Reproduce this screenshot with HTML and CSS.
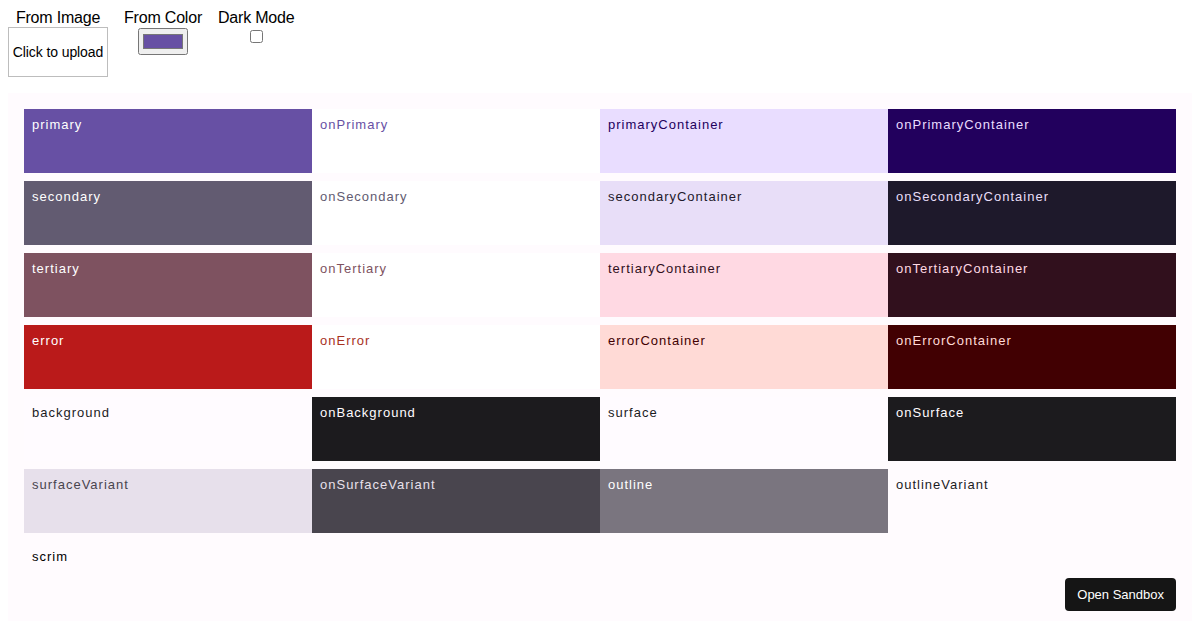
FILE: index.html
```html
<!DOCTYPE html>
<html lang="en">
<head>
  <meta charset="UTF-8" />
  <title>Material Theme Colors</title>
  <link rel="stylesheet" href="styles.css">
</head>
<body>

  <div class="controls">
    <div class="field">
      <label>From Image</label>
      <div class="upload">Click to upload</div>
    </div>
    <div class="field">
      <label>From Color</label>
      <input type="color" value="#6750a4">
    </div>
    <div class="field">
      <label>Dark Mode</label>
      <input type="checkbox">
    </div>
  </div>

  <div class="panel">
    <div class="grid">
      <div class="tile primary">primary</div>
      <div class="tile on-primary">onPrimary</div>
      <div class="tile primary-container">primaryContainer</div>
      <div class="tile on-primary-container">onPrimaryContainer</div>

      <div class="tile secondary">secondary</div>
      <div class="tile on-secondary">onSecondary</div>
      <div class="tile secondary-container">secondaryContainer</div>
      <div class="tile on-secondary-container">onSecondaryContainer</div>

      <div class="tile tertiary">tertiary</div>
      <div class="tile on-tertiary">onTertiary</div>
      <div class="tile tertiary-container">tertiaryContainer</div>
      <div class="tile on-tertiary-container">onTertiaryContainer</div>

      <div class="tile error">error</div>
      <div class="tile on-error">onError</div>
      <div class="tile error-container">errorContainer</div>
      <div class="tile on-error-container">onErrorContainer</div>

      <div class="tile background">background</div>
      <div class="tile on-background">onBackground</div>
      <div class="tile surface">surface</div>
      <div class="tile on-surface">onSurface</div>

      <div class="tile surface-variant">surfaceVariant</div>
      <div class="tile on-surface-variant">onSurfaceVariant</div>
      <div class="tile outline">outline</div>
      <div class="tile outline-variant">outlineVariant</div>

      <div class="tile scrim">scrim</div>
    </div>
    <button class="sandbox">Open Sandbox</button>
  </div>

</body>
</html>
```

FILE: styles.css
```css
body {
  margin: 8px;
  font-family: "Liberation Sans", Arial, sans-serif;
  background: #fff;
  color: #000;
}
.controls {
  display: flex;
  gap: 16px;
  align-items: flex-start;
}
.field {
  display: flex;
  flex-direction: column;
  align-items: center;
  font-size: 16px;
}
.field label {
  line-height: 19px;
  letter-spacing: -0.2px;
}
.upload {
  width: 98px;
  height: 48px;
  border: 1px solid #bdbdbd;
  display: flex;
  align-items: center;
  justify-content: center;
  font-size: 14px;
  letter-spacing: -0.1px;
}
.field input[type="color"] {
  width: 50px;
  height: 27px;
  margin: 1px 0 0;
}
.field input[type="checkbox"] {
  margin: 3px 0 0;
}
.panel {
  position: relative;
  margin-top: 16px;
  padding: 16px;
  background: #fffbfe;
}
.grid {
  display: grid;
  grid-template-columns: repeat(4, 1fr);
  grid-auto-rows: 64px;
  row-gap: 8px;
}
.tile {
  padding: 8px;
  font-family: "Liberation Sans", Arial, sans-serif;
  font-size: 13px;
  letter-spacing: 1px;
  line-height: 16px;
}
.primary { background: #6750a4; color: #ffffff; }
.on-primary { background: #ffffff; color: #6750a4; }
.primary-container { background: #e9ddff; color: #22005d; }
.on-primary-container { background: #22005d; color: #e9ddff; }
.secondary { background: #625b71; color: #ffffff; }
.on-secondary { background: #ffffff; color: #625b71; }
.secondary-container { background: #e8def8; color: #1e192b; }
.on-secondary-container { background: #1e192b; color: #e8def8; }
.tertiary { background: #7e5260; color: #ffffff; }
.on-tertiary { background: #ffffff; color: #7e5260; }
.tertiary-container { background: #ffd9e3; color: #31101d; }
.on-tertiary-container { background: #31101d; color: #ffd9e3; }
.error { background: #ba1a1a; color: #ffffff; }
.on-error { background: #ffffff; color: #a8321f; }
.error-container { background: #ffdad6; color: #410002; }
.on-error-container { background: #410002; color: #ffdad6; }
.background { background: #fffbff; color: #1c1b1e; }
.on-background { background: #1c1b1e; color: #fffbff; }
.surface { background: #fffbff; color: #1c1b1e; }
.on-surface { background: #1c1b1e; color: #fffbff; }
.surface-variant { background: #e7e0eb; color: #49454e; }
.on-surface-variant { background: #49454e; color: #e7e0eb; }
.outline { background: #7a757f; color: #ffffff; }
.outline-variant { color: #1c1b1e; }
.scrim { color: #000000; }
.sandbox {
  position: absolute;
  right: 16px;
  bottom: 10px;
  padding: 0 12px;
  height: 33px;
  background: #151515;
  color: #fff;
  border: none;
  border-radius: 4px;
  font-family: "Liberation Sans", Arial, sans-serif;
  font-size: 13px;
}
```
